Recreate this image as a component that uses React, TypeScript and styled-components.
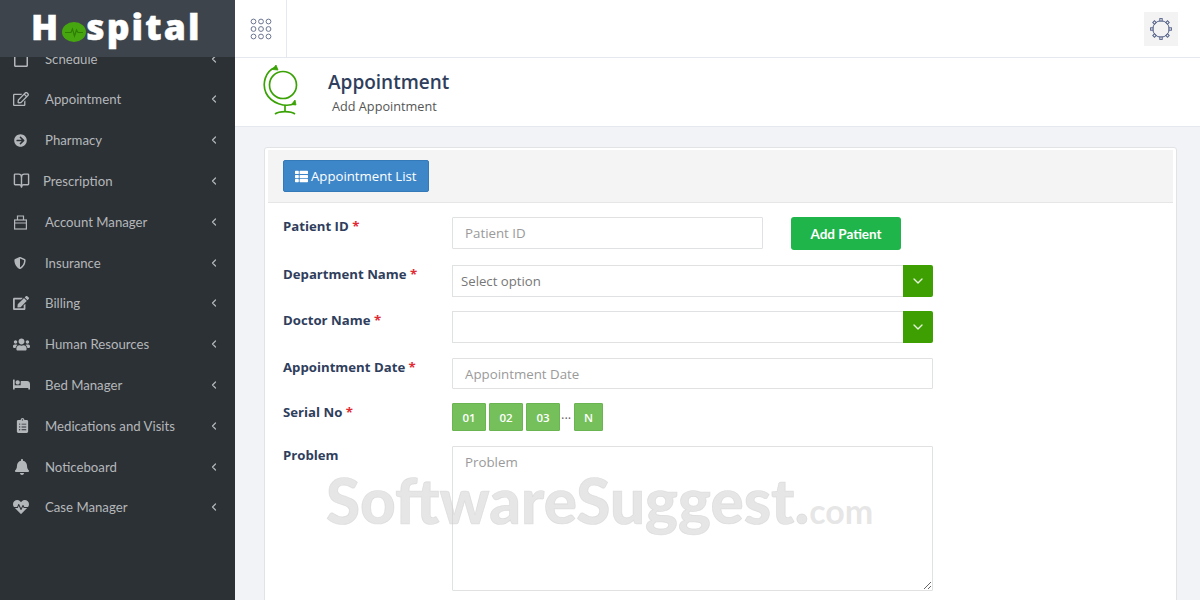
import React from "react";
import styled, { createGlobalStyle } from "styled-components";
import {
  FaRegCalendar, FaRegEdit, FaArrowCircleRight, FaShieldAlt, FaEdit, FaUsers, FaBed,
  FaClipboardList, FaBell, FaHeartbeat, FaThList,
} from "react-icons/fa";
import { LuBookOpen, LuChevronDown, LuChevronLeft } from "react-icons/lu";

const Global = createGlobalStyle`
  html, body { margin: 0; padding: 0; height: 600px; overflow: hidden; background: #f1f3f6; }
  #root { height: 600px; }
  * { box-sizing: border-box; }
`;

const Shell = styled.div`
  position: relative;
  display: flex;
  width: 1200px;
  height: 600px;
  overflow: hidden;
  font-family: "Open Sans", "Liberation Sans", sans-serif;
`;

const Sidebar = styled.aside`
  position: relative;
  flex: 0 0 235px;
  height: 600px;
  overflow: hidden;
  padding-top: 38.2px;
  background: #2c3136;
`;

const Brand = styled.div`
  position: absolute;
  top: 0;
  left: 0;
  width: 235px;
  height: 57px;
  display: flex;
  align-items: center;
  padding: 0 0 3px 31px;
  background: #3d444c;
  color: #fff;
  font-size: 35.5px;
  font-weight: 800;
  line-height: 1;
  -webkit-text-stroke: 0.5px #fff;
  z-index: 2;
`;

const BrandWord = styled.span`
  letter-spacing: 2.1px;
`;

const BrandDot = styled.svg`
  width: 24px;
  height: 20px;
  margin: 9px 0 0 4px;
  flex: none;
`;

const Menu = styled.ul`
  margin: 0;
  padding: 0;
  list-style: none;
`;

const MenuItem = styled.li`
  display: flex;
  align-items: center;
  height: 40.8px;
  padding: 0 15px 0 13px;
  color: #b4b7ba;
  font-family: "Lato", "Liberation Sans", sans-serif;
  font-size: 13.2px;
  font-weight: 400;
`;

const MenuIcon = styled.span`
  flex: 0 0 32px;
  display: flex;
  align-items: center;
  font-size: 16px;
  color: #b4b7ba;
`;

const MenuLabel = styled.span<{ $shift?: number }>`
  flex: 1;
  margin-left: ${(p) => p.$shift ?? 0}px;
  white-space: nowrap;
`;

const MenuCaret = styled.span`
  display: flex;
  color: #b4b7ba;
`;

const Main = styled.main`
  flex: 1;
  display: flex;
  flex-direction: column;
  min-width: 0;
`;

const TopBar = styled.header`
  flex: 0 0 58px;
  display: flex;
  align-items: center;
  justify-content: space-between;
  padding-right: 22px;
  background: #fff;
  border-bottom: 1px solid #e6e8ef;
`;

const AppsButton = styled.div`
  width: 52px;
  height: 57px;
  display: flex;
  align-items: center;
  justify-content: center;
  border-right: 1px solid #e6e8ef;
`;

const GearButton = styled.div`
  width: 34px;
  height: 34px;
  display: flex;
  align-items: center;
  justify-content: center;
  background: #f3f3f3;
`;

const TitleBar = styled.section`
  flex: 0 0 69px;
  display: flex;
  align-items: flex-start;
  padding: 6px 0 0 28px;
  background: #fff;
  border-bottom: 1px solid #e6e8ef;
`;

const TitleText = styled.div`
  margin: 6px 0 0 25px;
`;

const PageTitle = styled.h1`
  margin: 0;
  color: #2f3e5c;
  font-size: 19px;
  font-weight: 600;
  line-height: 24px;
`;

const PageSub = styled.div`
  margin: 4px 0 0 4px;
  color: #555;
  font-size: 12.7px;
  line-height: 16px;
`;

const Content = styled.div`
  flex: 1;
  padding: 20px 23px 0 29px;
`;

const Card = styled.section`
  height: 500px;
  padding: 2px 3px 0;
  background: #fff;
  border: 1px solid #e2e3e6;
  border-radius: 3px;
`;

const CardHead = styled.div`
  height: 53px;
  padding: 10px 15px;
  background: #f4f4f5;
  border-bottom: 1px solid #e6e6e6;
`;

const ListButton = styled.button`
  display: flex;
  align-items: center;
  gap: 3px;
  width: 146px;
  height: 32px;
  padding: 0 0 0 11px;
  background: #3d87c9;
  border: 1px solid #357ab8;
  border-radius: 2px;
  color: #fff;
  font-family: inherit;
  font-size: 13.2px;
  white-space: nowrap;
`;

const Form = styled.form`
  display: flex;
  flex-direction: column;
  padding: 14px 0 0 15px;
`;

const Row = styled.div<{ $mb: number }>`
  display: flex;
  align-items: flex-start;
  margin-bottom: ${(p) => p.$mb}px;
`;

const Label = styled.label`
  flex: 0 0 169px;
  color: #2f3e5c;
  font-size: 13.2px;
  font-weight: 700;
  line-height: 18px;
`;

const Star = styled.span`
  color: #e02b35;
`;

const Input = styled.input<{ $w: number; $h?: number }>`
  width: ${(p) => p.$w}px;
  height: ${(p) => p.$h ?? 32}px;
  padding: 0 12px;
  background: #fff;
  border: 1px solid #e0e1e3;
  border-radius: 1px;
  font-family: inherit;
  font-size: 13.3px;
  color: #555;
  &::placeholder { color: #9a9a9a; opacity: 1; }
`;

const AddButton = styled.button`
  width: 110px;
  height: 33px;
  margin-left: 28px;
  background: #1fb54a;
  border: none;
  border-radius: 3px;
  color: #fff;
  font-family: "Lato", sans-serif;
  font-size: 13.5px;
  font-weight: 700;
`;

const SelectBox = styled.div`
  width: 481px;
  height: 32px;
  display: flex;
`;

const SelectField = styled.div`
  flex: 1;
  display: flex;
  align-items: center;
  padding: 0 8px;
  border: 1px solid #e0e1e3;
  border-right: none;
  color: #777;
  font-size: 13.2px;
`;

const SelectArrow = styled.div`
  flex: 0 0 30px;
  display: flex;
  align-items: center;
  justify-content: center;
  background: #3d9f02;
  border-radius: 0 2px 2px 0;
  color: #e8f5dd;
  font-size: 16px;
`;

const Serials = styled.div`
  display: flex;
  align-items: flex-start;
  gap: 3px;
  color: #666;
  font-size: 13px;
`;

const Serial = styled.span<{ $w: number }>`
  width: ${(p) => p.$w}px;
  height: 28px;
  display: flex;
  align-items: center;
  justify-content: center;
  background: #75c05b;
  border: 1px solid #6ab451;
  border-radius: 1px;
  color: #fff;
  font-size: 11.5px;
  font-weight: 600;
`;

const Dots = styled.span`
  width: 10px;
  margin-left: -2px;
  line-height: 23px;
  white-space: nowrap;
`;

const Problem = styled.textarea`
  width: 481px;
  height: 145px;
  padding: 6px 12px;
  background: transparent;
  border: 1px solid #e0e1e3;
  border-radius: 1px;
  font-family: inherit;
  font-size: 13.3px;
  &::placeholder { color: #9a9a9a; opacity: 1; }
`;

const Watermark = styled.div`
  position: absolute;
  left: 326px;
  top: 462px;
  display: flex;
  align-items: baseline;
  color: rgba(205, 205, 205, 0.5);
  -webkit-text-stroke: 0.7px rgba(205, 205, 205, 0.5);
  font-family: "Lato", "Open Sans", sans-serif;
  font-size: 62px;
  font-weight: 900;
  line-height: 76px;
  letter-spacing: 0;
  pointer-events: none;
  white-space: nowrap;
`;

const WatermarkTld = styled.span`
  font-size: 34px;
  font-weight: 700;
  -webkit-text-stroke: 0;
`;

const Case = () => (
  <svg width="15" height="16" viewBox="0 0 15 16" fill="none" stroke="currentColor" strokeWidth="1.2">
    <rect x="1.6" y="6" width="11.8" height="9" />
    <path d="M4.5 6 V2 H10.5 V6 M1.6 9 H13.4" />
  </svg>
);

const items: { label: string; icon: React.ReactNode; shift?: number }[] = [
  { label: "Schedule", icon: <FaRegCalendar /> },
  { label: "Appointment", icon: <FaRegEdit /> },
  { label: "Pharmacy", icon: <FaArrowCircleRight style={{ fontSize: 13, marginLeft: 1 }} /> },
  { label: "Prescription", icon: <LuBookOpen size={17} />, shift: -2 },
  { label: "Account Manager", icon: <Case /> },
  { label: "Insurance", icon: <FaShieldAlt style={{ fontSize: 12, marginLeft: 1 }} /> },
  { label: "Billing", icon: <FaEdit /> },
  { label: "Human Resources", icon: <FaUsers style={{ fontSize: 17 }} /> },
  { label: "Bed Manager", icon: <FaBed style={{ fontSize: 17 }} /> },
  { label: "Medications and Visits", icon: <FaClipboardList style={{ fontSize: 15, marginLeft: 2 }} /> },
  { label: "Noticeboard", icon: <FaBell style={{ marginLeft: 1 }} /> },
  { label: "Case Manager", icon: <FaHeartbeat /> },
];

const Apps = () => (
  <svg width="22" height="22" viewBox="0 0 22 22" fill="none" stroke="#6b7690" strokeWidth="1">
    {[3.5, 11, 18.5].flatMap((y) =>
      [3.5, 11, 18.5].map((x) => <circle key={`${x}-${y}`} cx={x} cy={y} r="2.4" />)
    )}
  </svg>
);

const Gear = () => (
  <svg width="24" height="24" viewBox="0 0 24 24" fill="none" stroke="#55638a" strokeWidth="1">
    <circle cx="12" cy="12" r="8.2" />
    {[0, 45, 90, 135, 180, 225, 270, 315].map((a) => (
      <rect key={a} x="10.8" y="1.6" width="2.4" height="2.4" fill="#f3f3f3" transform={`rotate(${a} 12 12)`} />
    ))}
  </svg>
);

const Globe = () => (
  <svg width="40" height="52" viewBox="0 0 40 52" fill="none" stroke="#3aa205" strokeWidth="1.7">
    <path d="M12 3.5 C2 7.5 -1 20 3 29 C8 39 22 44 32 39.5" />
    <circle cx="20" cy="21" r="13.5" />
    <path d="M13 1 L15 6 L9.5 5.5 Z" fill="#3aa205" strokeWidth="0.8" />
    <path d="M32 36 L33 41 L28.5 40.5 Z" fill="#3aa205" strokeWidth="0.8" />
    <path d="M22 41 V47.5" />
    <path d="M12 50 C16 46.8 28 46.8 32 50" />
  </svg>
);

export default function App() {
  return (
    <Shell>
      <Global />
      <Sidebar>
        <Brand>
          <span>H</span>
          <BrandDot viewBox="0 0 24 20" preserveAspectRatio="none">
            <ellipse cx="12" cy="10" rx="12" ry="10" fill="#46a60f" stroke="none" />
            <path d="M3 10.5 H9 L10.5 7 L12.5 14 L14.5 8 L16 10.5 H21" fill="none" stroke="#2e7d05" strokeWidth="1.2" />
          </BrandDot>
          <BrandWord>spital</BrandWord>
        </Brand>
        <Menu>
          {items.map((it) => (
            <MenuItem key={it.label}>
              <MenuIcon>{it.icon}</MenuIcon>
              <MenuLabel $shift={it.shift}>{it.label}</MenuLabel>
              <MenuCaret><LuChevronLeft size={12} strokeWidth={2.4} /></MenuCaret>
            </MenuItem>
          ))}
        </Menu>
      </Sidebar>
      <Main>
        <TopBar>
          <AppsButton><Apps /></AppsButton>
          <GearButton><Gear /></GearButton>
        </TopBar>
        <TitleBar>
          <Globe />
          <TitleText>
            <PageTitle>Appointment</PageTitle>
            <PageSub>Add Appointment</PageSub>
          </TitleText>
        </TitleBar>
        <Content>
          <Card>
            <CardHead>
              <ListButton type="button"><FaThList size={13} />Appointment List</ListButton>
            </CardHead>
            <Form>
              <Row $mb={15}>
                <Label>Patient ID <Star>*</Star></Label>
                <Input $w={311} placeholder="Patient ID" />
                <AddButton type="button">Add Patient</AddButton>
              </Row>
              <Row $mb={14}>
                <Label>Department Name <Star>*</Star></Label>
                <SelectBox>
                  <SelectField>Select option</SelectField>
                  <SelectArrow><LuChevronDown /></SelectArrow>
                </SelectBox>
              </Row>
              <Row $mb={15}>
                <Label>Doctor Name <Star>*</Star></Label>
                <SelectBox>
                  <SelectField />
                  <SelectArrow><LuChevronDown /></SelectArrow>
                </SelectBox>
              </Row>
              <Row $mb={14}>
                <Label>Appointment Date <Star>*</Star></Label>
                <Input $w={481} $h={31} placeholder="Appointment Date" />
              </Row>
              <Row $mb={15}>
                <Label>Serial No <Star>*</Star></Label>
                <Serials>
                  <Serial $w={34}>01</Serial>
                  <Serial $w={34}>02</Serial>
                  <Serial $w={34}>03</Serial>
                  <Dots>...</Dots>
                  <Serial $w={29}>N</Serial>
                </Serials>
              </Row>
              <Row $mb={0}>
                <Label>Problem</Label>
                <Problem placeholder="Problem" />
              </Row>
            </Form>
          </Card>
        </Content>
      </Main>
      <Watermark>SoftwareSuggest.<WatermarkTld>com</WatermarkTld></Watermark>
    </Shell>
  );
}
